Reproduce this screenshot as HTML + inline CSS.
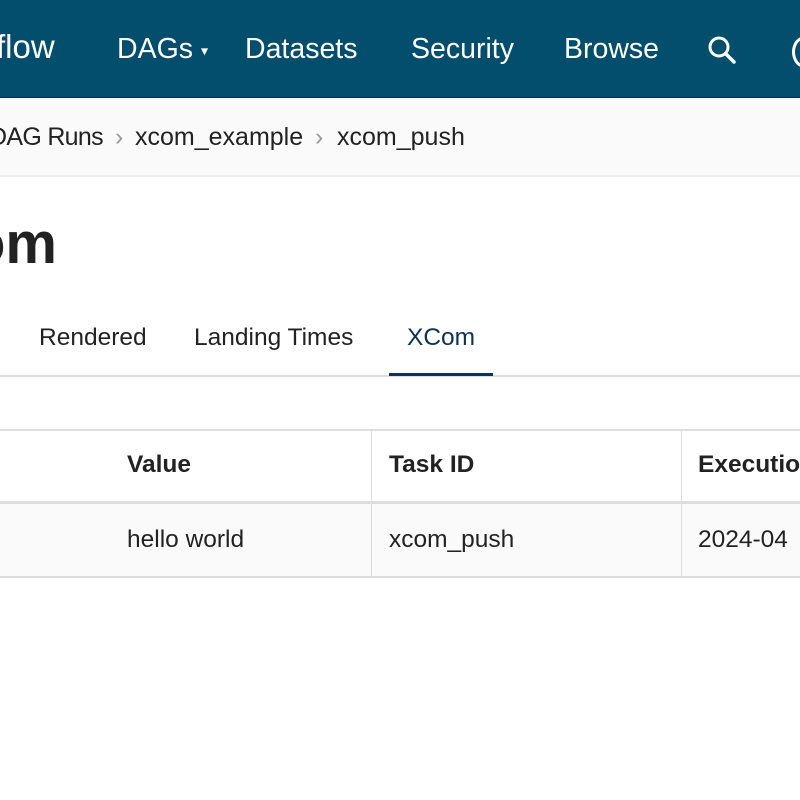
<!DOCTYPE html>
<html><head><style>
body{margin:0;width:800px;height:800px;overflow:hidden;background:#fff;font-family:"Liberation Sans",sans-serif;position:relative}
.nav{position:absolute;left:0;top:0;width:800px;height:97px;background:#034d6d;border-bottom:1px solid #01354c}
.nav span{position:absolute;top:31px;color:#fff;font-size:28.5px;line-height:36px}
.bc{position:absolute;top:98px;left:0;width:800px;height:77px;background:#fafafa;border-bottom:2px solid #eee}
.t{position:absolute;font-size:24.5px;color:#222;white-space:nowrap}
.b{font-size:25px;top:123px}
.h1{position:absolute;left:-30px;top:210px;font-size:58px;font-weight:bold;color:#222;line-height:68px}
.line{position:absolute;background:#ddd}
</style></head><body>
<div class="nav">
<span style="left:-4px;font-size:33px;top:29px">flow</span>
<span style="left:117px">DAGs <span style="position:static;font-size:14px;vertical-align:middle">▾</span></span>
<span style="left:245px">Datasets</span>
<span style="left:411px">Security</span>
<span style="left:564px">Browse</span>
<svg style="position:absolute;left:706px;top:34px" width="32" height="32" viewBox="0 0 32 32"><circle cx="13" cy="13" r="9" fill="none" stroke="#fff" stroke-width="3"/><line x1="19.5" y1="19.5" x2="28" y2="28" stroke="#fff" stroke-width="3.5" stroke-linecap="round"/></svg>
<div style="position:absolute;left:792px;top:36px;width:20px;height:26px;border:3px solid #fff;border-radius:50%"></div>
</div>
<div class="bc"></div>
<div class="t b" style="left:-11px;letter-spacing:-0.7px">DAG Runs</div>
<div class="t b" style="left:115px;color:#999">›</div>
<div class="t b" style="left:135px">xcom_example</div>
<div class="t b" style="left:315px;color:#999">›</div>
<div class="t b" style="left:337px">xcom_push</div>
<div class="h1">om</div>
<div class="t" style="left:39px;top:324px">Rendered</div>
<div class="t" style="left:194px;top:324px">Landing Times</div>
<div class="t" style="left:407px;top:324px;color:#0b3153">XCom</div>
<div class="line" style="left:0;top:375px;width:800px;height:2px"></div>
<div style="position:absolute;left:389px;top:373px;width:104px;height:3px;background:#0b3558"></div>
<div class="line" style="left:0;top:429px;width:800px;height:2px"></div>
<div class="line" style="left:0;top:501px;width:800px;height:3px"></div>
<div style="position:absolute;left:0;top:504px;width:800px;height:72px;background:#fafafa"></div>
<div class="line" style="left:0;top:576px;width:800px;height:2px"></div>
<div class="line" style="left:371px;top:431px;width:1px;height:145px"></div>
<div class="line" style="left:681px;top:431px;width:1px;height:145px"></div>
<div class="t" style="left:127px;top:451px;font-weight:bold">Value</div>
<div class="t" style="left:389px;top:451px;font-weight:bold">Task ID</div>
<div class="t" style="left:698px;top:451px;font-weight:bold">Execution</div>
<div class="t" style="left:127px;top:526px">hello world</div>
<div class="t" style="left:389px;top:526px">xcom_push</div>
<div class="t" style="left:698px;top:526px">2024-04</div>
</body></html>
